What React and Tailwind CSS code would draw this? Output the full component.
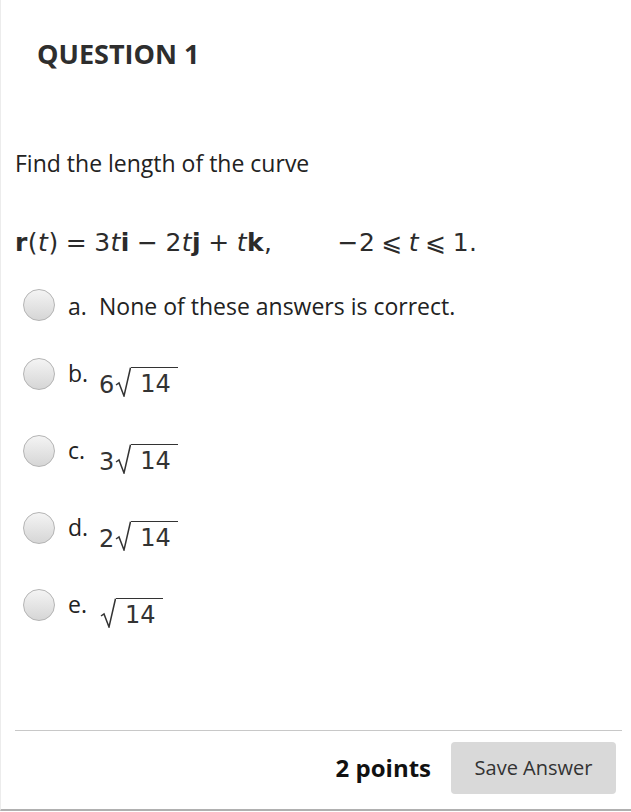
import React from "react";

const options = [
  { key: "a", text: "None of these answers is correct." },
  { key: "b", coef: "6" },
  { key: "c", coef: "3" },
  { key: "d", coef: "2" },
  { key: "e", coef: "" },
];

function Radio() {
  return (
    <span className="block w-8 h-8 shrink-0 rounded-full border border-[#b4b4b4] bg-gradient-to-b from-[#f4f4f4] to-[#d6d6d6]" />
  );
}

function Sqrt({ coef }) {
  return (
    <div className="flex items-start font-['DejaVu_Sans',sans-serif] text-[24px] text-[#333]">
      {coef && <span className="mt-[3.5px] leading-[28px]">{coef}</span>}
      <svg width="16" height="30" viewBox="0 0 16 30" className="ml-px shrink-0">
        <path d="M1 18 L4 16 L9 29 L15.5 0.75" fill="none" stroke="#333" strokeWidth="1.5" strokeLinejoin="miter" />
      </svg>
      <span className="border-t-[1.5px] border-[#333] pt-[2px] pl-[9px] pr-[7px] leading-[28px]">14</span>
    </div>
  );
}

export default function App() {
  return (
    <div className="w-[631px] h-[811px] flex flex-col bg-white border-l border-[#ececec] border-b-2 border-b-[#b0b0b0] font-['Open_Sans',sans-serif]">
      <h1 className="pt-[36px] pl-[36px] text-[27px] leading-[36px] font-bold text-[#2e2e2e]">QUESTION 1</h1>

      <p className="mt-[76px] pl-[14px] text-[23px] leading-[30px] text-[#222]">Find the length of the curve</p>

      <div className="mt-[49px] pl-[14px] flex font-['DejaVu_Sans',sans-serif] text-[25px] leading-[32px] tracking-[0.5px] text-[#2b2b2b]">
        <span>
          <b>r</b>(<i>t</i>)<span className="mx-[7px]">=</span>3<i>t</i><b>i</b>
          <span className="mx-[7px]">−</span>2<i>t</i><b>j</b>
          <span className="mx-[7px]">+</span>
          <i>t</i><b>k</b>,
        </span>
        <span className="ml-[65px]">
          −2<span className="mx-[6px]">⩽</span><i>t</i><span className="mx-[6px]">⩽</span>1.
        </span>
      </div>

      <div className="mt-[30px] flex flex-col">
        {options.map((o, i) => (
          <div key={o.key} className={`flex items-start pl-[22px] ${i === 0 ? "h-[69px]" : "h-[77px]"}`}>
            <Radio />
            <span className={`ml-[13px] w-[31px] text-[23px] leading-[30px] text-[#222] ${i === 0 ? "mt-[2px]" : "mt-0"}`}>
              {o.key}.
            </span>
            {o.text ? (
              <span className="mt-[2px] text-[23px] leading-[30px] text-[#222]">{o.text}</span>
            ) : (
              <div className="mt-[9px]">
                <Sqrt coef={o.coef} />
              </div>
            )}
          </div>
        ))}
      </div>

      <div className="mt-auto ml-[14px] w-[607px] h-px bg-[#c8c8c8]" />
      <div className="pt-[11px] pb-[15px] pr-[15px] flex justify-end items-center gap-5">
        <span className="text-[24px] font-bold text-[#111]">2 points</span>
        <button className="w-[165px] h-[52px] rounded-[4px] bg-[#d9d9d9] text-[20px] text-[#333]">Save Answer</button>
      </div>
    </div>
  );
}
